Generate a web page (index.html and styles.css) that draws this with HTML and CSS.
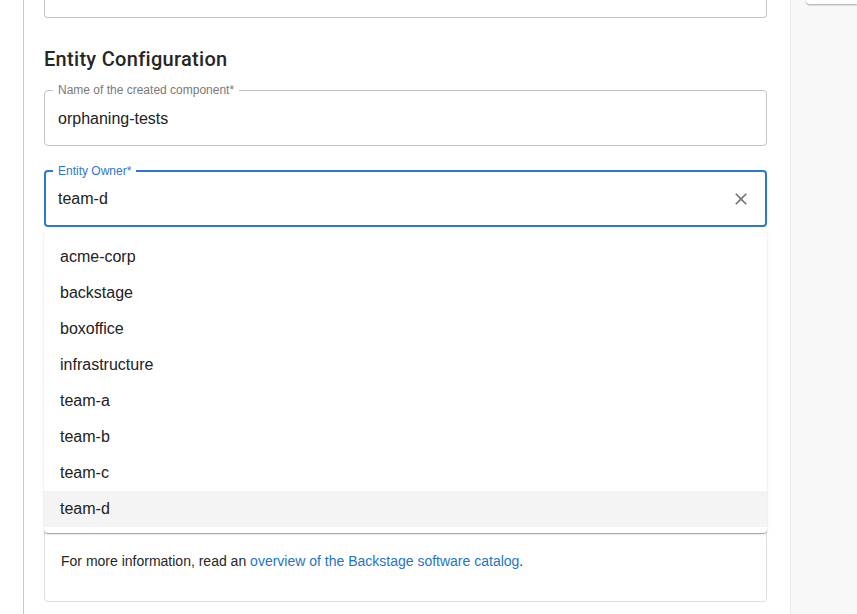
FILE: index.html
```html
<!DOCTYPE html>
<html lang="en">
<head>
<meta charset="utf-8">
<title>Create component – Entity Configuration</title>
<link rel="stylesheet" href="styles.css">
</head>
<body>
<div class="page">
  <div class="gutter"></div>
  <main class="panel">
    <div class="field-cut"></div>
    <h2 class="section-title">Entity Configuration</h2>

    <fieldset class="field">
      <legend class="field-label">Name of the created component*</legend>
      <div class="field-value">orphaning-tests</div>
    </fieldset>

    <div class="owner">
      <fieldset class="field field--focused">
        <legend class="field-label">Entity Owner*</legend>
        <div class="field-value field-value--row">
          <span>team-d</span>
          <svg class="clear-icon" viewBox="0 0 24 24" width="20" height="20" aria-hidden="true">
            <path d="M19 6.41L17.59 5 12 10.59 6.41 5 5 6.41 10.59 12 5 17.59 6.41 19 12 13.41 17.59 19 19 17.59 13.41 12z"/>
          </svg>
        </div>
      </fieldset>
      <ul class="listbox">
        <li class="option">acme-corp</li>
        <li class="option">backstage</li>
        <li class="option">boxoffice</li>
        <li class="option">infrastructure</li>
        <li class="option">team-a</li>
        <li class="option">team-b</li>
        <li class="option">team-c</li>
        <li class="option option--active">team-d</li>
      </ul>
    </div>

    <section class="info-card">
      <p class="info-text">For more information, read an <a class="link" href="#">overview of the Backstage software catalog</a>.</p>
    </section>
  </main>
  <aside class="side">
    <div class="side-card"></div>
  </aside>
</div>
</body>
</html>
```

FILE: styles.css
```css
* { box-sizing: border-box; }

html, body {
  margin: 0;
  padding: 0;
  height: 614px;
  overflow: hidden;
  background: #ffffff;
  font-family: "Liberation Sans", Arial, Helvetica, sans-serif;
  color: #222222;
}

.page {
  display: flex;
  height: 614px;
}

.gutter {
  width: 23px;
  flex: none;
  background: #ffffff;
}

.panel {
  width: 768px;
  flex: none;
  border-left: 1px solid #c8c8c8;
  border-right: 1px solid #ebebeb;
  padding: 0 23px 0 20px;
  background: #ffffff;
}

.field-cut {
  height: 18px;
  border: 1px solid #c4c4c4;
  border-top: none;
  border-radius: 0 0 4px 4px;
}

.section-title {
  margin: 29px 0 12px;
  font-family: Roboto, "Liberation Sans", Arial, sans-serif;
  font-size: 20px;
  line-height: 24px;
  font-weight: 500;
  letter-spacing: 0.3px;
  color: #262626;
}

.field {
  margin: 0;
  padding: 0 13px 0 8px;
  border: 1px solid #c4c4c4;
  border-radius: 4px;
  min-width: 0;
}

.field-label {
  padding: 0 5px;
  font-size: 12px;
  line-height: 14px;
  color: #7a7a7a;
}

.field-value {
  padding: 10px 0 14px 5px;
  font-size: 16px;
  line-height: 24px;
  color: #222222;
}

.owner {
  position: relative;
  margin-top: 18px;
}

.field--focused {
  border: 2px solid #2e77d0;
  padding: 0 12px 0 7px;
}

.field--focused .field-label {
  color: #2e77d0;
}

.field--focused .field-value {
  padding-top: 9px;
  padding-bottom: 14px;
}

.field-value--row {
  display: flex;
  align-items: center;
  justify-content: space-between;
}

.clear-icon {
  fill: #757575;
  margin-right: 2px;
}

.listbox {
  position: absolute;
  left: 0;
  right: 0;
  top: calc(100% + 4px);
  z-index: 10;
  margin: 0;
  padding: 8px 0 6px;
  list-style: none;
  background: #ffffff;
  border-radius: 4px;
  box-shadow: 0 2px 1px -1px rgba(0,0,0,0.2), 0 1px 1px 0 rgba(0,0,0,0.14), 0 1px 3px 0 rgba(0,0,0,0.12);
}

.option {
  height: 36px;
  padding: 0 16px;
  display: flex;
  align-items: center;
  font-size: 16px;
  color: #222222;
}

.option--active {
  background: #f4f4f4;
}

.info-card {
  margin-top: 24px;
  height: 351px;
  display: flex;
  flex-direction: column;
  justify-content: flex-end;
  border: 1px solid #dedede;
  border-radius: 4px;
  padding: 16px 16px 30px;
}

.info-text {
  margin: 0;
  font-size: 14px;
  line-height: 20px;
  color: #262626;
}

.link {
  color: #2374c6;
  text-decoration: none;
}

.side {
  flex: 1;
  background: #f8f8f8;
  padding-left: 15px;
}

.side-card {
  height: 4px;
  background: #ffffff;
  border-radius: 0 0 0 4px;
  box-shadow: 0 1px 2px rgba(0,0,0,0.35);
}
```
